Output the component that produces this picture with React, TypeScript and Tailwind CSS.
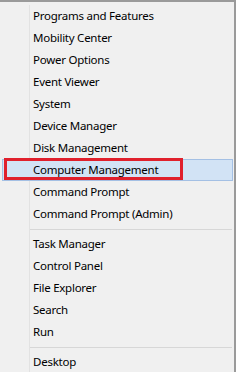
const groups = [
  [
    "Programs and Features",
    "Mobility Center",
    "Power Options",
    "Event Viewer",
    "System",
    "Device Manager",
    "Disk Management",
    "Computer Management",
    "Command Prompt",
    "Command Prompt (Admin)",
  ],
  ["Task Manager", "Control Panel", "File Explorer", "Search", "Run"],
  ["Desktop"],
];

const active = "Computer Management";

function MenuRow({ label }: { label: string }) {
  if (label === active) {
    return (
      <div className="relative ml-[2px] flex h-[22px] w-[231px] items-center border border-[#a4c0e4] bg-[#d2e3f5] pl-[30px]">
        <span>{label}</span>
        {/* annotation box drawn over the item */}
        <div className="absolute left-[1px] top-[-2px] h-[22px] w-[179px] border-[3px] border-[#e0202c]" />
      </div>
    );
  }
  return (
    <div className="flex h-[22px] items-center">
      <div className="h-full w-[30px] shrink-0 border-r border-[#e2e2e2]" />
      <span className="pl-[3px]">{label}</span>
    </div>
  );
}

function Separator() {
  return (
    <div className="flex h-[8px] items-center">
      <div className="h-full w-[30px] shrink-0 border-r border-[#e2e2e2]" />
      <div className="h-px w-[202px] bg-[#d7d7d7]" />
    </div>
  );
}

export default function App() {
  return (
    <div className="h-[372px] w-[236px] overflow-hidden border-r-2 border-t-2 border-[#9a9a9a] bg-[#f0f0f0] pt-[3px] font-['Noto_Sans',sans-serif] text-[11.5px] tracking-[-0.25px] text-black">
      {groups.map((items, i) => (
        <div key={i}>
          {i > 0 && <Separator />}
          {items.map((label) => (
            <MenuRow key={label} label={label} />
          ))}
        </div>
      ))}
    </div>
  );
}
